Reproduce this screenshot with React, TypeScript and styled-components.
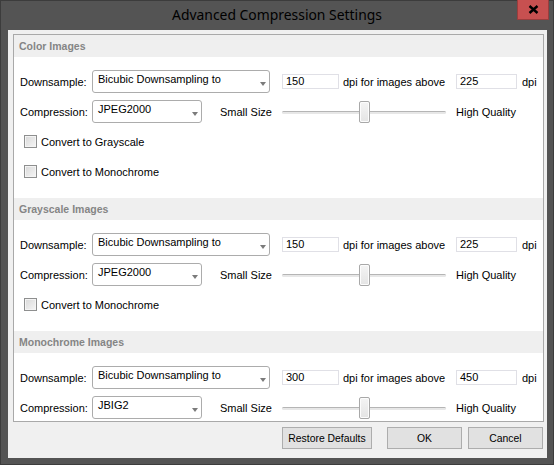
import styled, { createGlobalStyle } from "styled-components";

const GlobalStyle = createGlobalStyle`
  body {
    margin: 0;
    font-family: "Liberation Sans", Arial, sans-serif;
    font-size: 11px;
    color: #000;
  }
`;

const Window = styled.div`
  width: 554px;
  height: 465px;
  box-sizing: border-box;
  background: #545454;
  box-shadow: inset 0 0 0 1px #3c3c3c;
  display: flex;
  flex-direction: column;
  overflow: hidden;
`;

const TitleBar = styled.div`
  position: relative;
  height: 30px;
  flex: none;
  display: flex;
  align-items: center;
  justify-content: center;
  font-family: "Noto Sans", "Open Sans", sans-serif;
  font-size: 13.9px;
  color: #000;
  padding-bottom: 1px;
  box-sizing: border-box;
`;

const CloseButton = styled.div`
  position: absolute;
  top: 0;
  right: 5px;
  width: 32px;
  height: 20px;
  box-sizing: border-box;
  background: #c75050;
  border: 1px solid #9a3d3d;
  border-top: none;
  display: flex;
  align-items: center;
  justify-content: center;
`;

const Client = styled.div`
  flex: 1;
  margin: 0 7px 7px 8px;
  background: #f0f0f0;
  display: flex;
  flex-direction: column;
  padding: 4px 3px 0 5px;
`;

const Panel = styled.div`
  height: 388px;
  box-sizing: border-box;
  border: 1px solid #a9a9a9;
  background: #fff;
  overflow: hidden;
`;

const Band = styled.div`
  height: 22px;
  background: #efefef;
  display: flex;
  align-items: center;
  padding-left: 5px;
  font-weight: bold;
  font-size: 10.5px;
  color: #858585;
`;

const SectionBody = styled.div`
  padding: 13px 0 15px 6px;
  display: flex;
  flex-direction: column;
  gap: 7px;
`;

const Row = styled.div`
  height: 23px;
  display: flex;
  align-items: center;
  white-space: nowrap;
`;

const Label = styled.span<{ $width?: number; $ml?: number }>`
  width: ${(p) => (p.$width ? `${p.$width}px` : "auto")};
  margin-left: ${(p) => p.$ml ?? 0}px;
  flex: none;
`;

const Select = styled.div<{ $width: number }>`
  width: ${(p) => p.$width}px;
  height: 23px;
  box-sizing: border-box;
  border: 1px solid #acacac;
  border-radius: 3px;
  background: #fff;
  display: flex;
  justify-content: space-between;
  padding: 2px 3px 0 5px;
  line-height: 13px;
  flex: none;
`;

const Arrow = styled.span`
  align-self: center;
  margin-top: 2px;
  width: 0;
  height: 0;
  border-left: 3.5px solid transparent;
  border-right: 3.5px solid transparent;
  border-top: 4px solid #7b7b7b;
`;

const Field = styled.div<{ $width: number; $ml: number }>`
  width: ${(p) => p.$width}px;
  margin-left: ${(p) => p.$ml}px;
  height: 15px;
  box-sizing: border-box;
  border: 1px solid #e0e0e6;
  padding-left: 3px;
  line-height: 13px;
  flex: none;
`;

const Slider = styled.div`
  position: relative;
  width: 164px;
  height: 22px;
  flex: none;

  &::before {
    content: "";
    position: absolute;
    left: 0;
    right: 0;
    top: 10px;
    height: 3px;
    box-sizing: border-box;
    border-radius: 2px;
    border-top: 1px solid #b5b5b5;
    background: #e7e7e7;
  }
`;

const Thumb = styled.div`
  position: absolute;
  top: 0;
  width: 11px;
  height: 22px;
  box-sizing: border-box;
  border: 1px solid #a8a8a8;
  border-radius: 2px;
  background: linear-gradient(#f4f4f4, #e4e4e4);
  box-shadow: inset 0 0 0 1px #fcfcfc;
`;

const CheckRow = styled.label`
  height: 23px;
  display: flex;
  align-items: center;
  padding-left: 4px;
  gap: 4px;
`;

const Box = styled.span`
  width: 13px;
  height: 13px;
  box-sizing: border-box;
  border: 1px solid #8e8f8f;
  background: linear-gradient(135deg, #d8d8d8, #f6f6f6);
  box-shadow: inset 0 0 0 1px #f4f4f4;
  flex: none;
`;

const Footer = styled.div`
  display: flex;
  justify-content: flex-end;
  padding: 5px 1px 0 0;
`;

const Button = styled.button<{ $width: number; $mr?: number }>`
  width: ${(p) => p.$width}px;
  margin-right: ${(p) => p.$mr ?? 0}px;
  height: 22px;
  box-sizing: border-box;
  border: 1px solid #adadad;
  background: #e1e1e1;
  font-family: "Liberation Sans", Arial, sans-serif;
  font-size: 10.4px;
  color: #000;
  padding: 0;
`;

type Section = {
  title: string;
  dpi: string;
  above: string;
  compression: string;
  checks: string[];
};

const sections: Section[] = [
  {
    title: "Color Images",
    dpi: "150",
    above: "225",
    compression: "JPEG2000",
    checks: ["Convert to Grayscale", "Convert to Monochrome"],
  },
  {
    title: "Grayscale Images",
    dpi: "150",
    above: "225",
    compression: "JPEG2000",
    checks: ["Convert to Monochrome"],
  },
  {
    title: "Monochrome Images",
    dpi: "300",
    above: "450",
    compression: "JBIG2",
    checks: [],
  },
];

function ImageSection({ s }: { s: Section }) {
  const quality = 0.5;
  return (
    <>
      <Band>{s.title}</Band>
      <SectionBody>
        <Row>
          <Label $width={72}>Downsample:</Label>
          <Select $width={178}>
            <span>Bicubic Downsampling to</span>
            <Arrow />
          </Select>
          <Field $width={57} $ml={12}>{s.dpi}</Field>
          <Label $width={113} $ml={4}>dpi for images above</Label>
          <Field $width={61} $ml={0}>{s.above}</Field>
          <Label $ml={5}>dpi</Label>
        </Row>
        <Row>
          <Label $width={72}>Compression:</Label>
          <Select $width={110}>
            <span>{s.compression}</span>
            <Arrow />
          </Select>
          <Label $width={62} $ml={18}>Small Size</Label>
          <Slider>
            <Thumb style={{ left: `${quality * (164 - 11)}px` }} />
          </Slider>
          <Label $ml={10}>High Quality</Label>
        </Row>
        {s.checks.map((c) => (
          <CheckRow key={c}>
            <Box />
            <span>{c}</span>
          </CheckRow>
        ))}
      </SectionBody>
    </>
  );
}

export default function App() {
  return (
    <>
      <GlobalStyle />
      <Window>
        <TitleBar>
          Advanced Compression Settings
          <CloseButton>
            <svg width="11" height="9" viewBox="0 0 11 9">
              <path d="M1.5 1 L9.5 8 M9.5 1 L1.5 8" stroke="#000" strokeWidth="2.4" />
            </svg>
          </CloseButton>
        </TitleBar>
        <Client>
          <Panel>
            {sections.map((s) => (
              <ImageSection key={s.title} s={s} />
            ))}
          </Panel>
          <Footer>
            <Button $width={90} $mr={15}>Restore Defaults</Button>
            <Button $width={75} $mr={6}>OK</Button>
            <Button $width={75}>Cancel</Button>
          </Footer>
        </Client>
      </Window>
    </>
  );
}
